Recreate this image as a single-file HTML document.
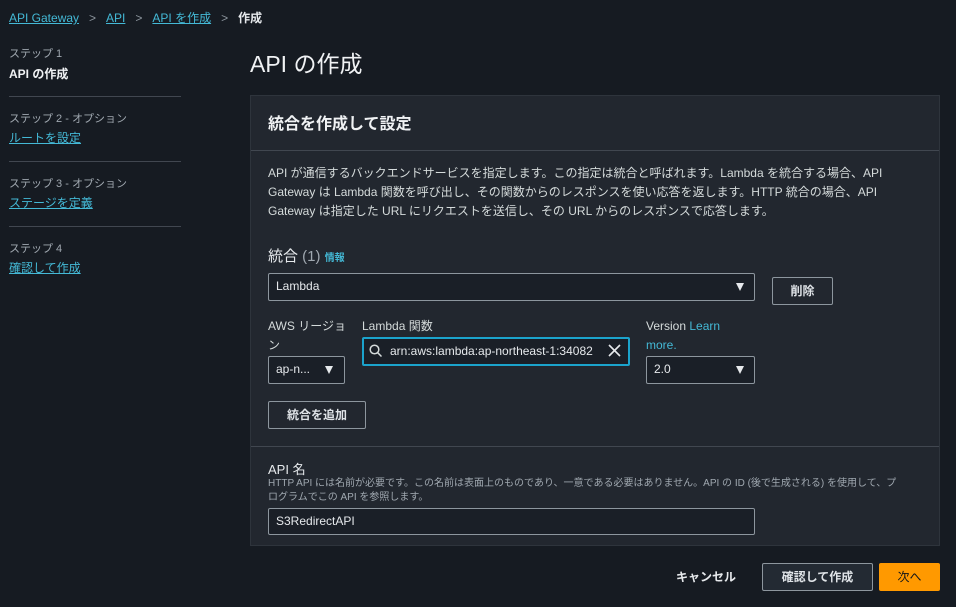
<!DOCTYPE html>
<html><head><meta charset="utf-8"><style>
*{box-sizing:border-box;margin:0;padding:0}
body{width:956px;height:607px;background:#161b22;font-family:"Liberation Sans","Noto Sans CJK JP",sans-serif;color:#d5dbdb;position:relative;overflow:hidden;font-size:12px}
.a{position:absolute;white-space:nowrap}
a,.lk{color:#44b9d6;text-decoration:underline}
.sm{color:#a0a8b0;font-size:11px}
.hr{position:absolute;left:9px;width:172px;height:1px;background:#414750}
.box{position:absolute;border:1px solid #8d969e;background:#1a1f27;border-radius:2px}
.btn{position:absolute;border:1px solid #8d969e;border-radius:2px;font-weight:bold;color:#e0e4e8;text-align:center;font-size:12px}
.tri{position:absolute;width:0;height:0;border-left:4.5px solid transparent;border-right:4.5px solid transparent;border-top:8px solid #e6e9ec}
</style></head><body>
<div class="a" style="left:9px;top:9px;font-size:12px"><a>API Gateway</a><span style="color:#8d969e;margin:0 10px">&gt;</span><a>API</a><span style="color:#8d969e;margin:0 10px">&gt;</span><a>API を作成</a><span style="color:#8d969e;margin:0 10px">&gt;</span><b style="color:#e6e9ec">作成</b></div>

<div class="a sm" style="left:9px;top:45px">ステップ 1</div>
<div class="a" style="left:9px;top:65px;font-weight:bold;color:#f0f2f4">API の作成</div>
<div class="hr" style="top:96px"></div>
<div class="a sm" style="left:9px;top:110px">ステップ 2 - オプション</div>
<div class="a lk" style="left:9px;top:129px">ルートを設定</div>
<div class="hr" style="top:161px"></div>
<div class="a sm" style="left:9px;top:175px">ステップ 3 - オプション</div>
<div class="a lk" style="left:9px;top:194px">ステージを定義</div>
<div class="hr" style="top:226px"></div>
<div class="a sm" style="left:9px;top:240px">ステップ 4</div>
<div class="a lk" style="left:9px;top:259px">確認して作成</div>

<div class="a" style="left:250px;top:45px;font-size:23px;color:#f0f2f4">API の作成</div>

<div style="position:absolute;left:250px;top:95px;width:690px;height:451px;background:#22272f;border:1px solid #2e343c"></div>
<div class="a" style="left:268px;top:110px;font-size:16px;font-weight:bold;color:#f0f2f4">統合を作成して設定</div>
<div style="position:absolute;left:251px;top:150px;width:688px;height:1px;background:#414750"></div>
<div class="a" style="left:268px;top:164px;line-height:19px;font-size:12px;color:#d5dbdb">API が通信するバックエンドサービスを指定します。この指定は統合と呼ばれます。Lambda を統合する場合、API<br>Gateway は Lambda 関数を呼び出し、その関数からのレスポンスを使い応答を返します。HTTP 統合の場合、API<br>Gateway は指定した URL にリクエストを送信し、その URL からのレスポンスで応答します。</div>
<div class="a" style="left:268px;top:245px;font-size:15px;color:#e6e9ec">統合 <span style="color:#a0a8b0">(1)</span> <span style="color:#44b9d6;font-size:10px;font-weight:bold">情報</span></div>
<div class="box" style="left:268px;top:273px;width:487px;height:28px"></div>
<div class="a" style="left:276px;top:279px;color:#e6e9ec">Lambda</div>
<div class="tri" style="left:736px;top:283px"></div>
<div class="btn" style="left:772px;top:277px;width:61px;height:28px;line-height:26px">削除</div>

<div class="a" style="left:268px;top:317px;line-height:19px;color:#d5dbdb">AWS リージョ<br>ン</div>
<div class="box" style="left:268px;top:356px;width:77px;height:28px"></div>
<div class="a" style="left:276px;top:362px;color:#e6e9ec">ap-n...</div>
<div class="tri" style="left:325px;top:366px"></div>
<div class="a" style="left:362px;top:317px;color:#d5dbdb">Lambda 関数</div>
<div style="position:absolute;left:362px;top:337px;width:268px;height:29px;border:2px solid #1ba3cc;border-radius:2px;background:#1a1f27"></div>
<svg class="a" style="left:369px;top:344px" width="14" height="14" viewBox="0 0 14 14"><circle cx="5.5" cy="5.5" r="4.3" fill="none" stroke="#d5dbdb" stroke-width="1.5"/><path d="M8.7 8.7L12.5 12.5" stroke="#d5dbdb" stroke-width="1.5"/></svg>
<div class="a" style="left:390px;top:344px;color:#e6e9ec">arn:aws:lambda:ap-northeast-1:34082</div>
<svg class="a" style="left:608px;top:344px" width="13" height="13" viewBox="0 0 13 13"><path d="M1 1L12 12M12 1L1 12" stroke="#e6e9ec" stroke-width="1.6"/></svg>
<div class="a" style="left:646px;top:317px;line-height:19px;color:#d5dbdb">Version <span style="color:#44b9d6">Learn</span><br><span style="color:#44b9d6">more.</span></div>
<div class="box" style="left:646px;top:356px;width:109px;height:28px"></div>
<div class="a" style="left:654px;top:362px;color:#e6e9ec">2.0</div>
<div class="tri" style="left:736px;top:366px"></div>
<div class="btn" style="left:268px;top:401px;width:98px;height:28px;line-height:26px">統合を追加</div>

<div style="position:absolute;left:251px;top:446px;width:688px;height:1px;background:#414750"></div>
<div class="a" style="left:268px;top:459px;font-size:13px;color:#e6e9ec">API 名</div>
<div class="a" style="left:268px;top:477px;font-size:10px;line-height:14px;color:#a0a8b0">HTTP API には名前が必要です。この名前は表面上のものであり、一意である必要はありません。API の ID (後で生成される) を使用して、プ<br>ログラムでこの API を参照します。</div>
<div class="box" style="left:268px;top:508px;width:487px;height:27px"></div>
<div class="a" style="left:276px;top:514px;color:#e6e9ec">S3RedirectAPI</div>

<div class="a" style="left:676px;top:568px;font-weight:bold;color:#e6e9ec">キャンセル</div>
<div class="btn" style="left:762px;top:563px;width:111px;height:28px;line-height:26px;background:#232a33">確認して作成</div>
<div class="btn" style="left:879px;top:563px;width:61px;height:28px;line-height:28px;background:#ff9900;border:none;color:#0f141a;font-weight:normal">次へ</div>
</body></html>
